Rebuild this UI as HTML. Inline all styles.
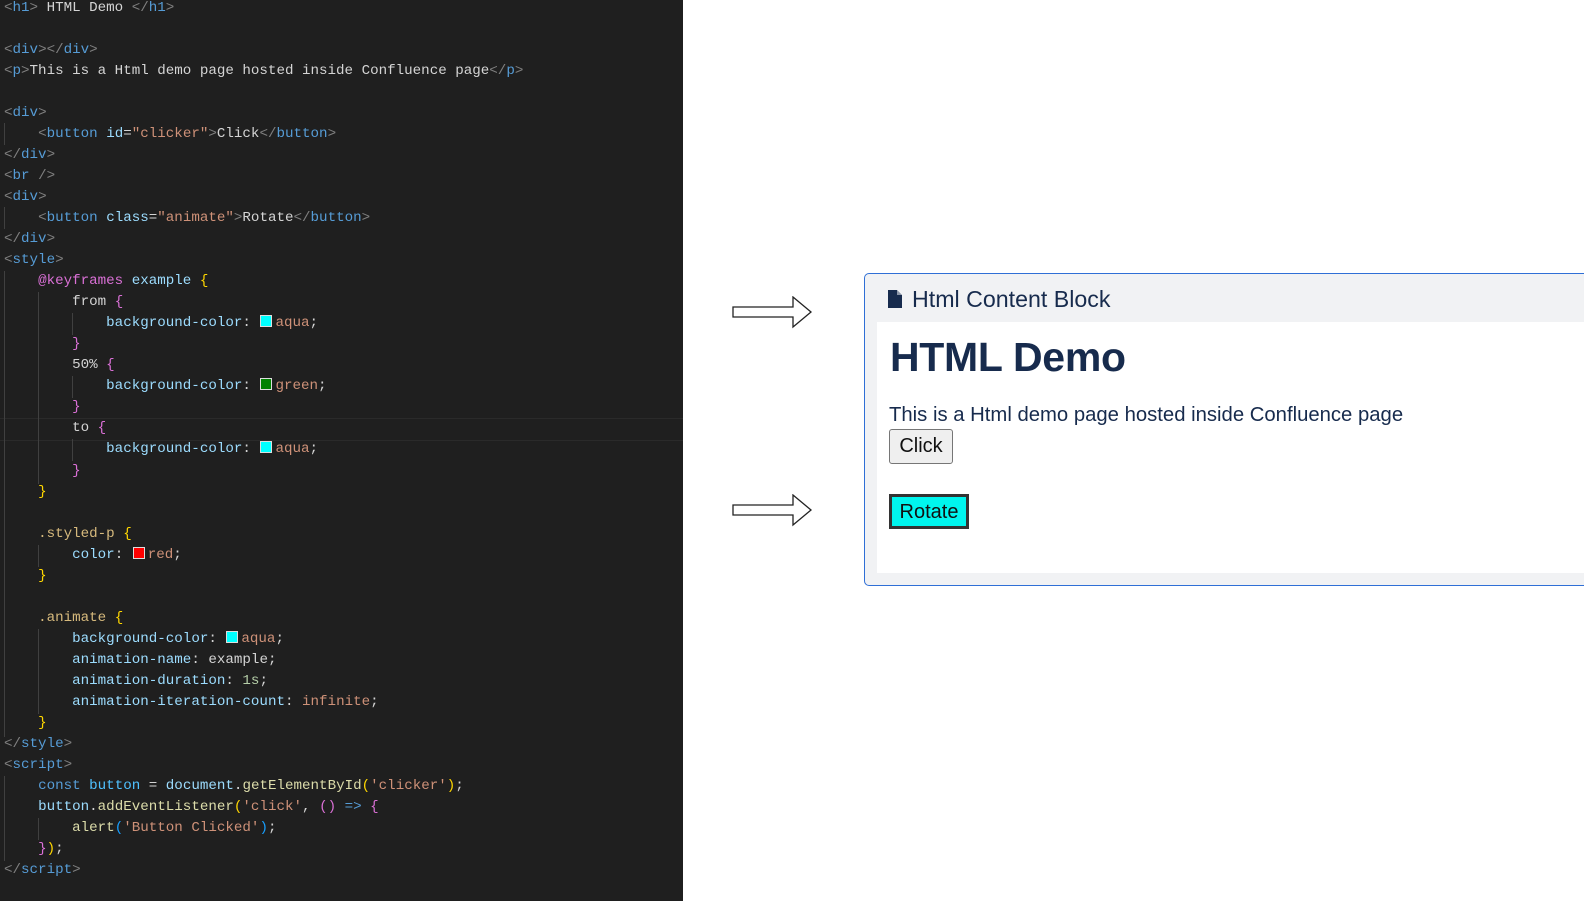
<!DOCTYPE html>
<html><head><meta charset="utf-8"><style>
html,body{margin:0;padding:0;width:1584px;height:901px;overflow:hidden;background:#fff;}
#code{position:absolute;left:0;top:0;width:683px;height:901px;background:#1f1f1f;}
pre{position:absolute;left:4px;top:-2.5px;margin:0;font-family:"Liberation Mono",monospace;font-size:14.2px;line-height:21.05px;color:#d4d4d4;}
.g{color:#808080}.t{color:#569cd6}.a{color:#9cdcfe}.s{color:#ce9178}.sel{color:#d7ba7d}
.y{color:#ffd700}.p{color:#da70d6}.b{color:#179fff}.n{color:#b5cea8}.f{color:#dcdcaa}.v{color:#4fc1ff}.w{color:#d4d4d4}
.sw{display:inline-block;width:10px;height:10px;border:1px solid #ddd;margin:0 3px 0 1px;vertical-align:-1px;}
.gl{position:absolute;width:1px;background:#404040;}
.hl{position:absolute;left:0;width:683px;top:418px;height:21px;border-top:1px solid #2a2a2a;border-bottom:1px solid #2a2a2a;}
#card{position:absolute;left:864px;top:273px;width:720px;height:311px;border:1.5px solid #2f6fd6;border-right:none;border-radius:5px 0 0 5px;background:#f1f2f4;font-family:"Liberation Sans",sans-serif;color:#172b4d;}
#inner{position:absolute;left:12px;top:48px;right:0;height:251px;background:#fff;}
</style></head><body>
<div id="code">
<div class="hl"></div>
<div class="gl" style="left:4px;top:123px;height:22px"></div>
<div class="gl" style="left:4px;top:207px;height:22px"></div>
<div class="gl" style="left:4px;top:271px;height:466px"></div>
<div class="gl" style="left:38px;top:292px;height:192px"></div>
<div class="gl" style="left:72px;top:313px;height:22px"></div>
<div class="gl" style="left:72px;top:376px;height:22px"></div>
<div class="gl" style="left:72px;top:439px;height:22px"></div>
<div class="gl" style="left:38px;top:545px;height:22px"></div>
<div class="gl" style="left:38px;top:629px;height:85px"></div>
<div class="gl" style="left:4px;top:776px;height:85px"></div>
<div class="gl" style="left:38px;top:818px;height:22px"></div>
<pre><span class="g">&lt;</span><span class="t">h1</span><span class="g">&gt;</span> HTML Demo <span class="g">&lt;/</span><span class="t">h1</span><span class="g">&gt;</span>

<span class="g">&lt;</span><span class="t">div</span><span class="g">&gt;&lt;/</span><span class="t">div</span><span class="g">&gt;</span>
<span class="g">&lt;</span><span class="t">p</span><span class="g">&gt;</span>This is a Html demo page hosted inside Confluence page<span class="g">&lt;/</span><span class="t">p</span><span class="g">&gt;</span>

<span class="g">&lt;</span><span class="t">div</span><span class="g">&gt;</span>
    <span class="g">&lt;</span><span class="t">button</span> <span class="a">id</span>=<span class="s">"clicker"</span><span class="g">&gt;</span>Click<span class="g">&lt;/</span><span class="t">button</span><span class="g">&gt;</span>
<span class="g">&lt;/</span><span class="t">div</span><span class="g">&gt;</span>
<span class="g">&lt;</span><span class="t">br</span> <span class="g">/&gt;</span>
<span class="g">&lt;</span><span class="t">div</span><span class="g">&gt;</span>
    <span class="g">&lt;</span><span class="t">button</span> <span class="a">class</span>=<span class="s">"animate"</span><span class="g">&gt;</span>Rotate<span class="g">&lt;/</span><span class="t">button</span><span class="g">&gt;</span>
<span class="g">&lt;/</span><span class="t">div</span><span class="g">&gt;</span>
<span class="g">&lt;</span><span class="t">style</span><span class="g">&gt;</span>
    <span class="p">@keyframes</span> <span class="a">example</span> <span class="y">{</span>
        from <span class="p">{</span>
            <span class="a">background-color</span>: <span class="sw" style="background:aqua"></span><span class="s">aqua</span>;
        <span class="p">}</span>
        50% <span class="p">{</span>
            <span class="a">background-color</span>: <span class="sw" style="background:green"></span><span class="s">green</span>;
        <span class="p">}</span>
        to <span class="p">{</span>
            <span class="a">background-color</span>: <span class="sw" style="background:aqua"></span><span class="s">aqua</span>;
        <span class="p">}</span>
    <span class="y">}</span>

    <span class="sel">.styled-p</span> <span class="y">{</span>
        <span class="a">color</span>: <span class="sw" style="background:red"></span><span class="s">red</span>;
    <span class="y">}</span>

    <span class="sel">.animate</span> <span class="y">{</span>
        <span class="a">background-color</span>: <span class="sw" style="background:aqua"></span><span class="s">aqua</span>;
        <span class="a">animation-name</span>: example;
        <span class="a">animation-duration</span>: <span class="n">1s</span>;
        <span class="a">animation-iteration-count</span>: <span class="s">infinite</span>;
    <span class="y">}</span>
<span class="g">&lt;/</span><span class="t">style</span><span class="g">&gt;</span>
<span class="g">&lt;</span><span class="t">script</span><span class="g">&gt;</span>
    <span class="t">const</span> <span class="v">button</span> = <span class="a">document</span>.<span class="f">getElementById</span><span class="y">(</span><span class="s">'clicker'</span><span class="y">)</span>;
    <span class="a">button</span>.<span class="f">addEventListener</span><span class="y">(</span><span class="s">'click'</span>, <span class="p">()</span> <span class="t">=&gt;</span> <span class="p">{</span>
        <span class="f">alert</span><span class="b">(</span><span class="s">'Button Clicked'</span><span class="b">)</span>;
    <span class="p">}</span><span class="y">)</span>;
<span class="g">&lt;/</span><span class="t">script</span><span class="g">&gt;</span></pre>
</div>

<svg style="position:absolute;left:732px;top:296px" width="82" height="34"><path d="M1 11H61V1L79 16L61 31V21H1Z" fill="#fff" stroke="#222" stroke-width="1.3"/></svg>
<svg style="position:absolute;left:732px;top:494px" width="82" height="34"><path d="M1 11H61V1L79 16L61 31V21H1Z" fill="#fff" stroke="#222" stroke-width="1.3"/></svg>

<div id="card">
  <svg style="position:absolute;left:22px;top:16px" width="16" height="18" viewBox="0 0 16 18"><path d="M1 0H10L15 5V18H1Z" fill="#172b4d"/><path d="M10 0V5H15" fill="#fff" opacity=".5"/></svg>
  <div style="position:absolute;left:47px;top:12px;font-size:23.2px;">Html Content Block</div>
  <div id="inner">
    <div style="position:absolute;left:13px;top:12px;font-size:41px;font-weight:bold;letter-spacing:-0.3px;">HTML Demo</div>
    <div style="position:absolute;left:12px;top:82px;font-size:20.3px;color:#172b4d;">This is a Html demo page hosted inside Confluence page</div>
    <div style="position:absolute;left:12px;top:107px;width:62px;height:33px;border:1px solid #767676;border-radius:3px;background:#efefef;font-size:20px;color:#111;text-align:center;line-height:33px;box-sizing:content-box;">Click</div>
    <div style="position:absolute;left:12px;top:172px;width:74px;height:29px;border:3px solid #333;background:#00f5ee;font-size:20px;color:#111;text-align:center;line-height:31px;">Rotate</div>
  </div>
</div>
</body></html>
